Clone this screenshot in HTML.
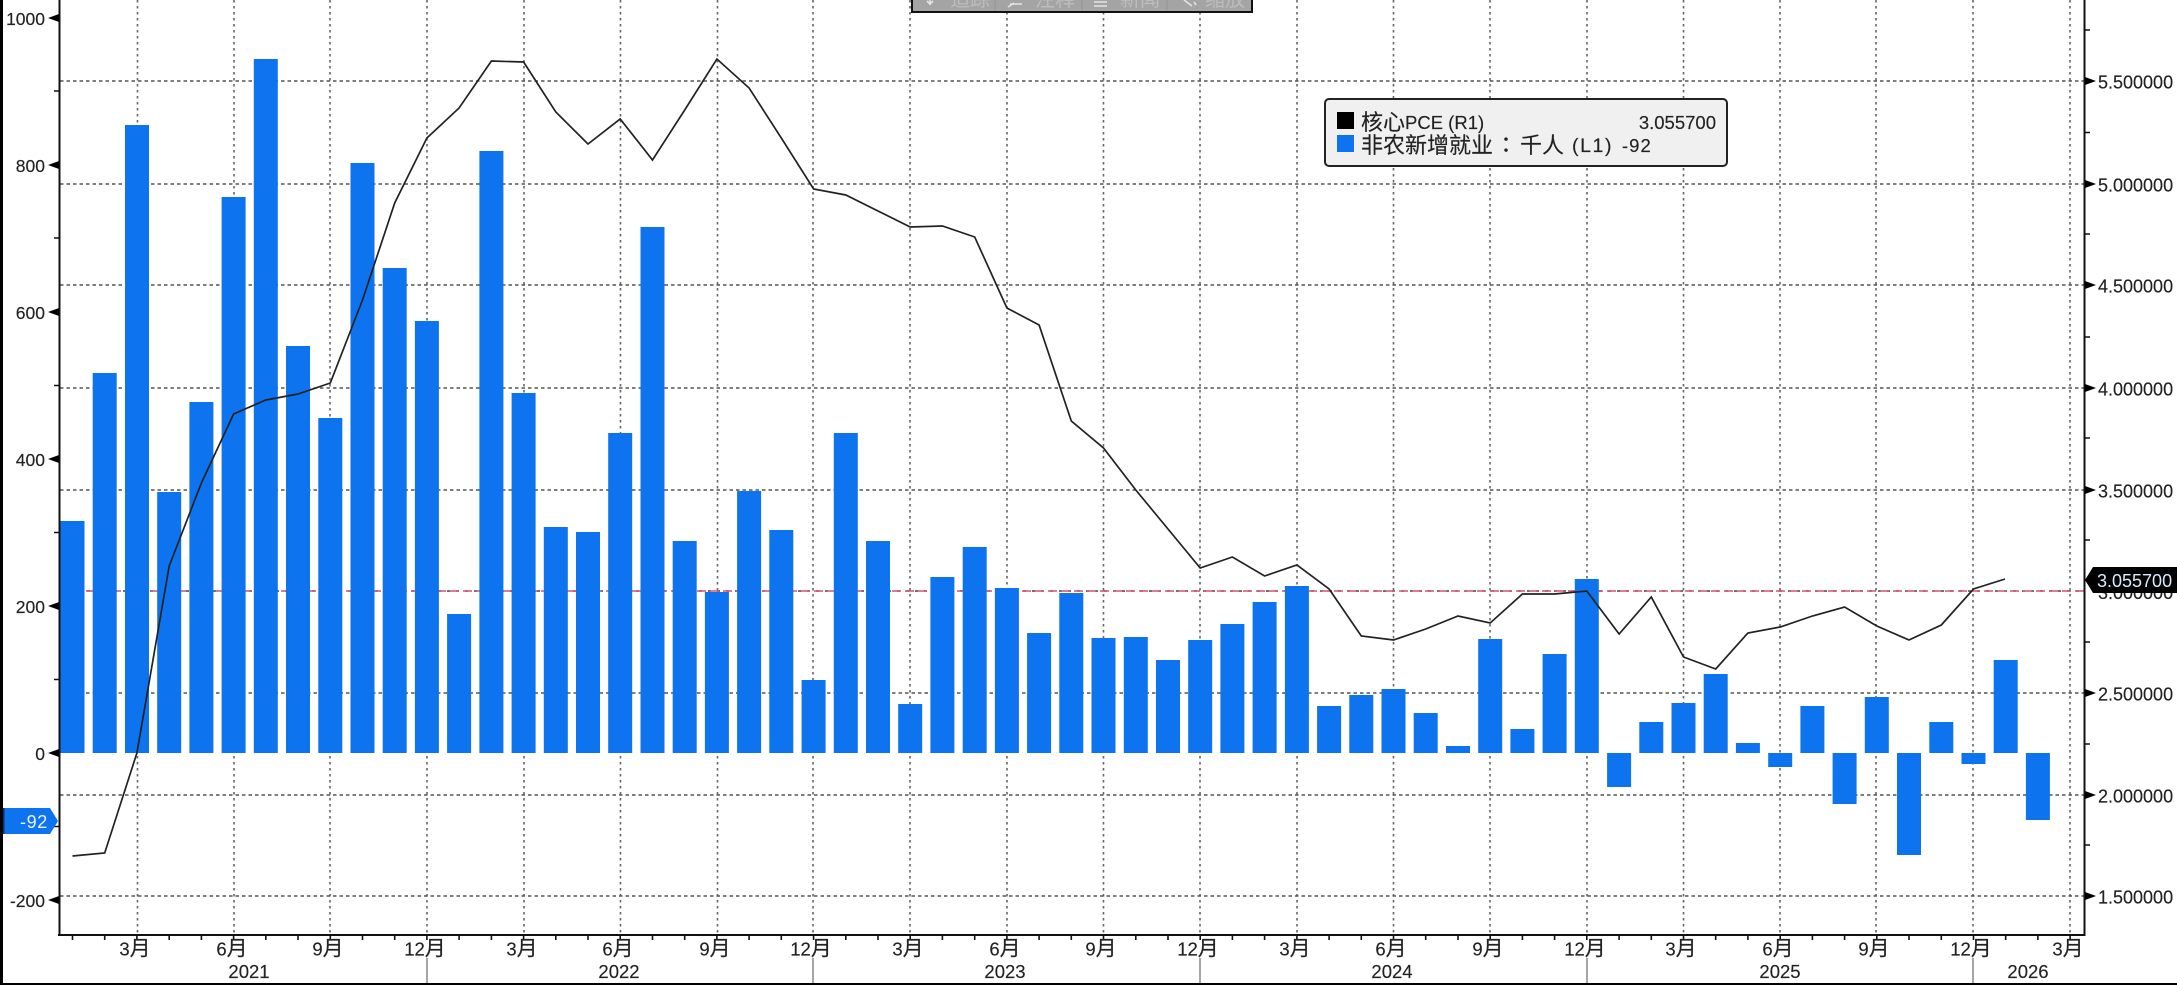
<!DOCTYPE html>
<html lang="zh">
<head>
<meta charset="utf-8">
<title>核心PCE 与 非农新增就业</title>
<style>
html,body{margin:0;padding:0;background:#fff;width:2177px;height:985px;overflow:hidden}
svg{display:block}
text{font-family:"Liberation Sans","Noto Sans CJK SC",sans-serif;fill:#222;stroke:#222;stroke-width:.15px}
.ax{font-size:18px}
.lf{font-size:17.5px;text-anchor:end}
.m{font-size:18.5px;text-anchor:middle}
.m tspan{font-size:21px}
.lg{font-size:18.5px}
.cj{font-size:22px}
.tb{font-size:20px;fill:#bdbdbd;stroke:none}
.wt{stroke:none}
</style>
</head>
<body>
<svg width="2177" height="985" viewBox="0 0 2177 985" xmlns="http://www.w3.org/2000/svg">
<rect width="2177" height="985" fill="#fff"/>

<!-- grid -->
<path d="M137.5 0V935M234 0V935M330 0V935M427 0V935M524 0V935M620.5 0V935M717.5 0V935M813 0V935M910 0V935M1007 0V935M1103.5 0V935M1200 0V935M1297 0V935M1393.5 0V935M1490 0V935M1587 0V935M1683.5 0V935M1780 0V935M1876 0V935M1973 0V935M2070 0V935" stroke="#666" stroke-width="1.6" stroke-dasharray="2.5 3.5" fill="none"/>
<path d="M60 81H2084M60 184H2084M60 285H2084M60 388H2084M60 490H2084M60 693H2084M60 795H2084M60 896H2084" stroke="#555" stroke-width="1.5" stroke-dasharray="3.5 3" fill="none"/>
<path d="M60 591H2084" stroke="#444" stroke-width="1.5" stroke-dasharray="3 6" fill="none"/>
<path d="M60 591H2084" stroke="#d9506c" stroke-width="1.5" stroke-dasharray="9 4" fill="none"/>

<!-- bars -->
<path fill="#0e73ee" d="M60.5 521h24V753h-24zM92.7 373h24V753h-24zM125 125h24V753h-24zM157.2 492h24V753h-24zM189.4 402h24V753h-24zM221.6 197h24V753h-24zM253.8 59h24V753h-24zM286 346h24V753h-24zM318.3 418h24V753h-24zM350.5 163h24V753h-24zM382.7 268h24V753h-24zM414.9 321h24V753h-24zM447.1 614h24V753h-24zM479.4 151h24V753h-24zM511.6 393h24V753h-24zM543.8 527h24V753h-24zM576 532h24V753h-24zM608.2 433h24V753h-24zM640.5 227h24V753h-24zM672.7 541h24V753h-24zM704.9 592h24V753h-24zM737.1 491h24V753h-24zM769.3 530h24V753h-24zM801.6 680h24V753h-24zM833.8 433h24V753h-24zM866 541h24V753h-24zM898.2 704h24V753h-24zM930.4 577h24V753h-24zM962.7 547h24V753h-24zM994.9 588h24V753h-24zM1027.1 633h24V753h-24zM1059.3 593h24V753h-24zM1091.5 638h24V753h-24zM1123.8 637h24V753h-24zM1156 660h24V753h-24zM1188.2 640h24V753h-24zM1220.4 624h24V753h-24zM1252.6 602h24V753h-24zM1284.9 586h24V753h-24zM1317.1 706h24V753h-24zM1349.3 695h24V753h-24zM1381.5 689h24V753h-24zM1413.7 713h24V753h-24zM1446 746h24V753h-24zM1478.2 639h24V753h-24zM1510.4 729h24V753h-24zM1542.6 654h24V753h-24zM1574.8 579h24V753h-24zM1607.1 753h24V787h-24zM1639.3 722h24V753h-24zM1671.5 703h24V753h-24zM1703.7 674h24V753h-24zM1735.9 743h24V753h-24zM1768.2 753h24V767h-24zM1800.4 706h24V753h-24zM1832.6 753h24V804h-24zM1864.8 697h24V753h-24zM1897 753h24V855h-24zM1929.3 722h24V753h-24zM1961.5 753h24V764h-24zM1993.7 660h24V753h-24zM2025.9 753h24V820h-24z"/>

<!-- line -->
<polyline fill="none" stroke="#222" stroke-width="1.7" stroke-linejoin="miter" points="72.5,856 104.7,853 136.9,753 169.2,566 201.4,483 233.6,414 265.8,400 298,394 330.3,383 362.5,300 394.7,203 426.9,138 459.1,108 491.4,61 523.6,62 555.8,112 588,144 620.2,119 652.5,160 684.7,110 716.9,59 749.1,88 781.3,138 813.6,189 845.8,195 878,211 910.2,227 942.4,226 974.7,237 1006.9,308 1039.1,325 1071.3,421 1103.5,448 1135.8,490 1168,529 1200.2,568 1232.4,557 1264.6,576 1296.9,565 1329.1,589 1361.3,636 1393.5,640 1425.7,629 1458,616 1490.2,623 1522.4,594 1554.6,594 1586.8,591 1619.1,634 1651.3,597 1683.5,657 1715.7,669 1747.9,633 1780.2,627 1812.4,616 1844.6,607 1876.8,626 1909,640 1941.3,625 1973.5,589 2005,579"/>

<!-- axes -->
<path d="M59.5 0V936M58 935H2085M2084.5 0V936" stroke="#111" stroke-width="2" fill="none"/>
<path d="M72.5 935v5M104.7 935v5M136.9 935v5M169.2 935v5M201.4 935v5M233.6 935v5M265.8 935v5M298 935v5M330.3 935v5M362.5 935v5M394.7 935v5M426.9 935v5M459.1 935v5M491.4 935v5M523.6 935v5M555.8 935v5M588 935v5M620.2 935v5M652.5 935v5M684.7 935v5M716.9 935v5M749.1 935v5M781.3 935v5M813.6 935v5M845.8 935v5M878 935v5M910.2 935v5M942.4 935v5M974.7 935v5M1006.9 935v5M1039.1 935v5M1071.3 935v5M1103.5 935v5M1135.8 935v5M1168 935v5M1200.2 935v5M1232.4 935v5M1264.6 935v5M1296.9 935v5M1329.1 935v5M1361.3 935v5M1393.5 935v5M1425.7 935v5M1458 935v5M1490.2 935v5M1522.4 935v5M1554.6 935v5M1586.8 935v5M1619.1 935v5M1651.3 935v5M1683.5 935v5M1715.7 935v5M1747.9 935v5M1780.2 935v5M1812.4 935v5M1844.6 935v5M1876.8 935v5M1909 935v5M1941.3 935v5M1973.5 935v5M2005.7 935v5M2037.9 935v5M2070.1 935v5" stroke="#111" stroke-width="1.6" fill="none"/>
<path d="M54 91h5M54 238h5M54 385.5h5M54 532.5h5M54 679.5h5M54 826.5h5M2085 30h5M2085 132.5h5M2085 234h5M2085 337h5M2085 438h5M2085 540h5M2085 642h5M2085 744h5M2085 845h5" stroke="#111" stroke-width="1.6" fill="none"/>
<path fill="#000" d="M48 18l11-4v8zM48 165l11-4v8zM48 312l11-4v8zM48 459l11-4v8zM48 606l11-4v8zM48 753l11-4v8zM48 900l11-4v8zM2096 81l-11-4v8zM2096 184l-11-4v8zM2096 285l-11-4v8zM2096 388l-11-4v8zM2096 490l-11-4v8zM2096 693l-11-4v8zM2096 795l-11-4v8zM2096 896l-11-4v8z"/>

<!-- year dividers -->
<path d="M427 958V983M813 958V983M1200 958V983M1587 958V983M1973 958V983" stroke="#8a8a8a" stroke-width="1.5" fill="none"/>

<!-- left labels -->
<text class="lf" x="45" y="25">1000</text>
<text class="lf" x="45" y="172">800</text>
<text class="lf" x="45" y="319">600</text>
<text class="lf" x="45" y="466">400</text>
<text class="lf" x="45" y="613">200</text>
<text class="lf" x="45" y="760">0</text>
<text class="lf" x="45" y="907">-200</text>

<!-- right labels -->
<text class="ax" x="2098" y="88.5">5.500000</text>
<text class="ax" x="2098" y="191.5">5.000000</text>
<text class="ax" x="2098" y="292.5">4.500000</text>
<text class="ax" x="2098" y="395.5">4.000000</text>
<text class="ax" x="2098" y="497.5">3.500000</text>
<text class="ax" x="2098" y="599">3.000000</text>
<text class="ax" x="2098" y="700.5">2.500000</text>
<text class="ax" x="2098" y="802.5">2.000000</text>
<text class="ax" x="2098" y="903.5">1.500000</text>

<!-- month labels -->
<text class="m" x="135" y="955.5">3<tspan>月</tspan></text><text class="m" x="232" y="955.5">6<tspan>月</tspan></text><text class="m" x="328" y="955.5">9<tspan>月</tspan></text><text class="m" x="425" y="955.5">12<tspan>月</tspan></text>
<text class="m" x="522" y="955.5">3<tspan>月</tspan></text><text class="m" x="618" y="955.5">6<tspan>月</tspan></text><text class="m" x="715" y="955.5">9<tspan>月</tspan></text><text class="m" x="811" y="955.5">12<tspan>月</tspan></text>
<text class="m" x="908" y="955.5">3<tspan>月</tspan></text><text class="m" x="1005" y="955.5">6<tspan>月</tspan></text><text class="m" x="1101" y="955.5">9<tspan>月</tspan></text><text class="m" x="1198" y="955.5">12<tspan>月</tspan></text>
<text class="m" x="1295" y="955.5">3<tspan>月</tspan></text><text class="m" x="1391" y="955.5">6<tspan>月</tspan></text><text class="m" x="1488" y="955.5">9<tspan>月</tspan></text><text class="m" x="1585" y="955.5">12<tspan>月</tspan></text>
<text class="m" x="1681" y="955.5">3<tspan>月</tspan></text><text class="m" x="1778" y="955.5">6<tspan>月</tspan></text><text class="m" x="1874" y="955.5">9<tspan>月</tspan></text><text class="m" x="1971" y="955.5">12<tspan>月</tspan></text>
<text class="m" x="2068" y="955.5">3<tspan>月</tspan></text>

<text class="m" x="249" y="978">2021</text>
<text class="m" x="619" y="978">2022</text>
<text class="m" x="1005" y="978">2023</text>
<text class="m" x="1392" y="978">2024</text>
<text class="m" x="1780" y="978">2025</text>
<text class="m" x="2028" y="978">2026</text>

<!-- value flags -->
<polygon points="3,808 50,808 58,821 50,834 3,834" fill="#0e73ee"/>
<rect x="3" y="808" width="1.5" height="26" fill="#06306e"/>
<text class="wt" x="20" y="828" style="font-size:18px;fill:#e8f2ff;letter-spacing:.6px">-92</text>
<polygon points="2093,567 2177,567 2177,593 2093,593 2085,580" fill="#000"/>
<text class="ax wt" x="2097" y="587" style="fill:#d8ecff">3.055700</text>

<!-- legend -->
<rect x="1325" y="99" width="402" height="67" rx="4" ry="4" fill="#f0f0f0" stroke="#222" stroke-width="2"/>
<rect x="1337" y="112" width="17" height="17" fill="#000"/>
<rect x="1337" y="135" width="17" height="17" fill="#0e73ee"/>
<text class="cj" x="1361" y="130">核心</text>
<text class="lg" x="1405" y="129">PCE (R1)</text>
<text class="lg" x="1716" y="129" text-anchor="end">3.055700</text>
<text class="cj" x="1361" y="153">非农新增就业</text>
<text class="cj" x="1495" y="153" style="font-family:'Noto Sans CJK TC',sans-serif">：</text>
<text class="cj" x="1520" y="153">千人</text>
<text class="lg" x="1572" y="152" style="letter-spacing:1.6px;font-size:19.5px">(L1)</text>
<text class="lg" x="1622" y="152" style="letter-spacing:1px">-92</text>

<!-- toolbar (cut off at top) -->
<rect x="912" y="-4" width="340" height="16" fill="#a4a4a4" stroke="#111" stroke-width="2"/>
<path d="M995 0V11M1082 0V11M1167 0V11" stroke="#999" stroke-width="1.5"/>
<svg x="912" y="0" width="340" height="11" viewBox="912 0 340 11">
<text class="tb" x="950" y="6">追踪</text>
<text class="tb" x="1035" y="6">注释</text>
<text class="tb" x="1120" y="6">新闻</text>
<text class="tb" x="1205" y="6">缩放</text>
<path d="M930 0v5M927 1l3 3 3-3M1010 4h12M1008 7l6-4M1094 2h13M1094 6h13M1184 0l8 6M1194 2l2 3" stroke="#e4e4e4" stroke-width="1.6" fill="none"/>
</svg>

<!-- screen edges -->
<rect x="0" y="0" width="3" height="985" fill="#000"/>
<rect x="0" y="983" width="2177" height="2" fill="#000"/>
</svg>
</body>
</html>
